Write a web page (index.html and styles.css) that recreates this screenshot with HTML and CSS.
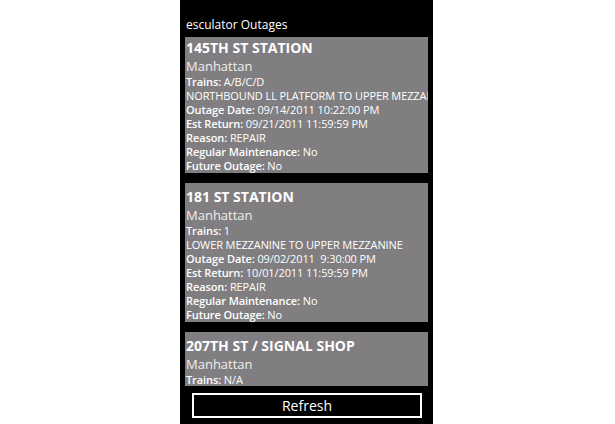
FILE: index.html
```html
<!DOCTYPE html>
<html lang="en">

<head>
    <meta charset="UTF-8">
    <meta name="viewport" content="width=device-width, initial-scale=1.0">
    <title>Escalator Outages</title>

    <link rel="stylesheet" href="styles.css">
</head>

<body>
    <div class="phone">
        <div class="page-title">esculator Outages</div>

        <!-- 列表区域，已向下滚动了一点 -->
        <div class="outage-list">
            <div class="outage-item">
                <p class="station">145TH ST STATION</p>
                <p class="borough">Manhattan</p>
                <p class="row"><b>Trains:</b> A/B/C/D</p>
                <p class="row">NORTHBOUND LL PLATFORM TO UPPER MEZZANINE</p>
                <p class="row"><b>Outage Date:</b> 09/14/2011 10:22:00 PM</p>
                <p class="row"><b>Est Return:</b> 09/21/2011 11:59:59 PM</p>
                <p class="row"><b>Reason:</b> REPAIR</p>
                <p class="row"><b>Regular Maintenance:</b> No</p>
                <p class="row"><b>Future Outage:</b> No</p>
            </div>
            <div class="outage-item">
                <p class="station">181 ST STATION</p>
                <p class="borough">Manhattan</p>
                <p class="row"><b>Trains:</b> 1</p>
                <p class="row">LOWER MEZZANINE TO UPPER MEZZANINE</p>
                <p class="row"><b>Outage Date:</b> 09/02/2011 &nbsp;9:30:00 PM</p>
                <p class="row"><b>Est Return:</b> 10/01/2011 11:59:59 PM</p>
                <p class="row"><b>Reason:</b> REPAIR</p>
                <p class="row"><b>Regular Maintenance:</b> No</p>
                <p class="row"><b>Future Outage:</b> No</p>
            </div>
            <div class="outage-item">
                <p class="station">207TH ST / SIGNAL SHOP</p>
                <p class="borough">Manhattan</p>
                <p class="row"><b>Trains:</b> N/A</p>
            </div>
        </div>

        <div class="toolbar">
            <button class="refresh">Refresh</button>
        </div>
    </div>
</body>

</html>
```

FILE: styles.css
```css
* {
    box-sizing: border-box;
}

body {
    margin: 0;
    background: #fff;
    font-family: "Open Sans", "Noto Sans", sans-serif;
}

.phone {
    width: 253px;
    height: 424px;
    margin-left: 180px;
    padding: 0 5px;
    background: #000;
    color: #fff;
}

.page-title {
    height: 37px;
    padding: 17px 0 0 1px;
    font-size: 12px;
    line-height: 16px;
}

/* 列表 */
.outage-list {
    height: 349px;
    overflow: hidden;
}

.outage-item {
    height: 139px;
    margin-bottom: 10px;
    padding: 4px 0 0 1px;
    background: #807e80;
    overflow: hidden;
}

/* 第一项被滚出去 3px */
.outage-item:first-child {
    margin-top: -3px;
}

.outage-item p {
    margin: 0;
    white-space: nowrap;
}

.outage-item .station {
    font-size: 14px;
    line-height: 19px;
    font-weight: 700;
}

.outage-item .borough {
    font-size: 13px;
    line-height: 18px;
    color: #eee;
}

.outage-item .row {
    font-size: 11px;
    line-height: 14px;
    letter-spacing: -0.1px;
}

.outage-item .row b {
    font-weight: 600;
}

/* 底部按钮 */
.toolbar {
    padding: 7px 6px 0 7px;
}

.refresh {
    display: block;
    width: 100%;
    height: 25px;
    padding: 0 0 1px;
    border: 2px solid #fff;
    background: #000;
    color: #fff;
    font-family: inherit;
    font-size: 14px;
    line-height: 19px;
    cursor: pointer;
}
```
